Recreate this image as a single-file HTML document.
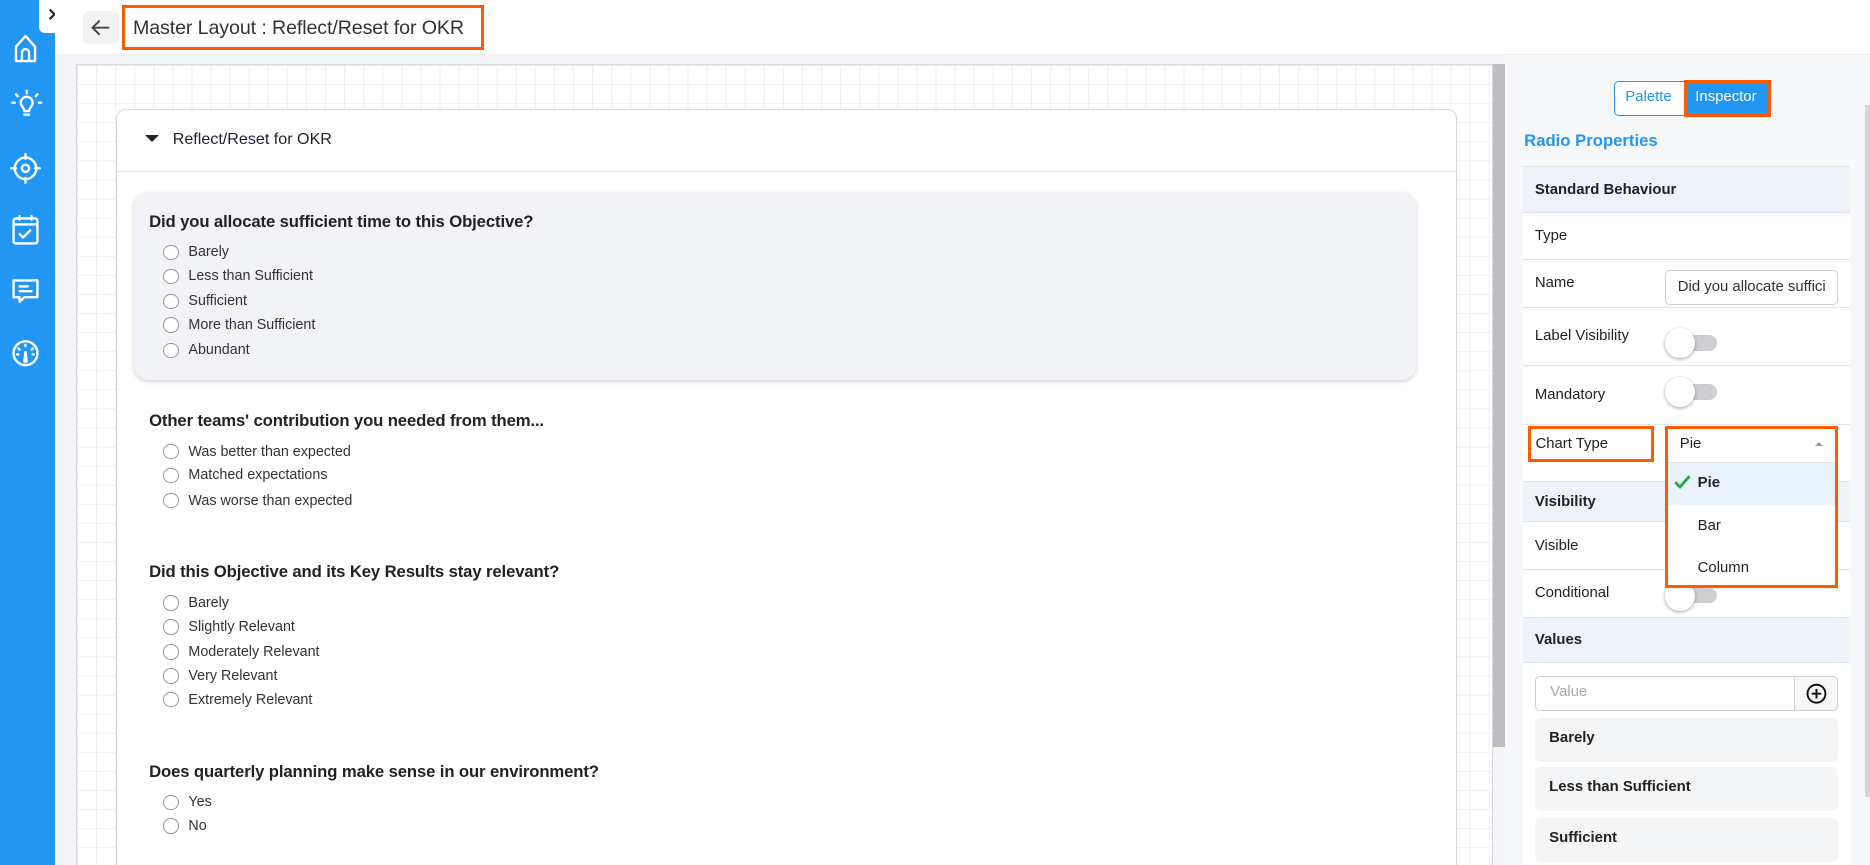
<!DOCTYPE html>
<html><head><meta charset="utf-8">
<style>
html{zoom:1.19260;background:#f4f5f8;overflow:hidden;height:725px}
*{box-sizing:border-box;margin:0;padding:0}
body{width:1568px;height:725px;overflow:hidden;font-family:"Liberation Sans",sans-serif;background:#f4f5f8;position:relative;color:#222}
.abs{position:absolute}
.sb{left:0;top:0;width:46px;height:725px;background:#2196f3}
.tab{left:33px;top:0;width:22px;height:28px;background:#fff;border-radius:0 0 5px 5px}
.hdr{left:46px;top:0;width:1522px;height:46px;background:#fff;border-bottom:1px solid #eceef2}
.back{left:70px;top:9px;width:30px;height:28px;background:#f2f3f5;border-radius:5px}
.title{left:102px;top:4px;width:304px;height:38px;border:3px solid #ff5a00;font-size:16.5px;color:#333;padding:8px 0 0 7px;background:#fff;white-space:nowrap;letter-spacing:-0.1px}
.canvas{left:64px;top:54px;width:1188px;height:671px;border:1px solid #d8d8dc;border-bottom:none;background-color:#fff;
background-image:linear-gradient(#efeff2 1px,transparent 1px),linear-gradient(90deg,#efeff2 1px,transparent 1px);background-size:16px 16px}
.scroll{left:1252px;top:54px;width:10px;height:572px;background:#bdbdc2}
.card{left:97px;top:91px;width:1125px;height:634px;background:#fff;border:1px solid #d8d8dc;border-bottom:none;border-radius:8px 8px 0 0}
.ch{height:52px;border-bottom:1px solid #e6e6ea;font-size:13.5px;padding:17px 0 0 47px;position:relative;color:#1e2230}
.tri{position:absolute;left:24px;top:21px;width:0;height:0;border-left:6px solid transparent;border-right:6px solid transparent;border-top:6px solid #1e2230}
.q1{left:112px;top:162px;width:1075px;height:157px;background:#f2f3f6;border-radius:12px;box-shadow:0 1px 4px rgba(0,0,0,.18)}
.qt{font-size:14px;font-weight:bold;color:#222;position:absolute;left:125px;letter-spacing:-0.1px}
.op{position:absolute;left:137px;font-size:12px;color:#333;display:flex;align-items:center}
.op i{width:13px;height:13px;border:1px solid #999;border-radius:50%;margin-right:8px;background:#fff;display:inline-block}
.rp{left:1262px;top:46px;width:306px;height:679px;background:#f7f8fa}
.rs{left:1564px;top:88px;width:4px;height:580px;background:#d6d6da}
.row{position:absolute;left:1277px;width:274px;border-bottom:1px solid #e2e4e8;background:#fff;font-size:12.5px;padding-left:10px;display:flex;align-items:center;color:#222}
.sec{background:#eef3fa;font-weight:bold}
.tg{position:absolute;left:1396px;width:44px}
.tg b{position:absolute;left:14px;top:3px;width:30px;height:13px;background:#cfcfd2;border-radius:7px}
.tg i{position:absolute;left:0;top:-3px;width:25px;height:25px;border-radius:50%;background:#fff;box-shadow:0 1px 3px rgba(0,0,0,.35)}
.vi{position:absolute;left:1287px;width:254px;height:37px;background:#f4f5f7;border-radius:5px;font-size:12.5px;font-weight:bold;padding:10px 0 0 12px}
</style></head><body>
<div class="abs sb"></div>
<div class="abs tab"><svg width="22" height="28"><path d="M9 8l4 4-4 4" stroke="#222" stroke-width="1.8" fill="none"/></svg></div>
<svg class="abs" style="left:8px;top:25px" width="30" height="290" fill="none" stroke="#fff" stroke-width="2" stroke-linejoin="round" stroke-linecap="round">
<path d="M5 14L13 5l8 9v12H5z M10 26v-7a3 3 0 016 0v7"/>
<g transform="translate(0,52)"><path d="M9 9a5 5 0 1110 0c0 3-3 4-3 7h-4c0-3-3-4-3-7z M12 19h4"/><path d="M14 -1v2M5 2l1.5 1.5M23 2l-1.5 1.5M2 9h2M24 9h2"/></g>
<g transform="translate(0,103)"><circle cx="13" cy="13" r="9"/><circle cx="13" cy="13" r="3"/><path d="M13 1v4M13 21v4M1 13h4M21 13h4"/></g>
<g transform="translate(0,155)"><rect x="3" y="3" width="20" height="21" rx="2"/><path d="M3 8h20M8 1v3M18 1v3M8 16l3 3 6-6"/></g>
<g transform="translate(0,206)"><path d="M3 4h20v14H12l-4 4v-4H3z M8 9h7M8 13h10"/></g>
<g transform="translate(0,258)"><circle cx="13" cy="13" r="10"/><path d="M13 6v1M7 9l1 1M19 9l-1 1M6 14h1M19 14h1M12 20l1-8 1 8z"/></g>
</svg>
<div class="abs hdr"></div>
<div class="abs back"><svg width="30" height="28"><path d="M22 14H9M14 8l-6 6 6 6" stroke="#444" stroke-width="1.6" fill="none"/></svg></div>
<div class="abs title">Master Layout : Reflect/Reset for OKR</div>
<div class="abs canvas"></div>
<div class="abs scroll"></div>
<div class="abs card"><div class="ch"><span class="tri"></span>Reflect/Reset for OKR</div></div>
<div class="abs q1"></div>
<div class="qt" style="top:178px">Did you allocate sufficient time to this Objective?</div>
<div class="op" style="top:205px"><i></i>Barely</div>
<div class="op" style="top:225px"><i></i>Less than Sufficient</div>
<div class="op" style="top:246px"><i></i>Sufficient</div>
<div class="op" style="top:266px"><i></i>More than Sufficient</div>
<div class="op" style="top:287px"><i></i>Abundant</div>
<div class="qt" style="top:345px">Other teams' contribution you needed from them...</div>
<div class="op" style="top:372px"><i></i>Was better than expected</div>
<div class="op" style="top:392px"><i></i>Matched expectations</div>
<div class="op" style="top:413px"><i></i>Was worse than expected</div>
<div class="qt" style="top:471px">Did this Objective and its Key Results stay relevant?</div>
<div class="op" style="top:499px"><i></i>Barely</div>
<div class="op" style="top:519px"><i></i>Slightly Relevant</div>
<div class="op" style="top:540px"><i></i>Moderately Relevant</div>
<div class="op" style="top:560px"><i></i>Very Relevant</div>
<div class="op" style="top:580px"><i></i>Extremely Relevant</div>
<div class="qt" style="top:639px">Does quarterly planning make sense in our environment?</div>
<div class="op" style="top:666px"><i></i>Yes</div>
<div class="op" style="top:686px"><i></i>No</div>

<div class="abs rp"></div>
<div class="abs rs"></div>
<div class="abs" style="left:1353px;top:68px;width:60px;height:29px;border:1px solid #2196f3;border-radius:4px 0 0 4px;background:#fff;color:#2196f3;font-size:12.5px;padding:6px 0 0 9px">Palette</div>
<div class="abs" style="left:1412px;top:67px;width:73px;height:31px;border:3px solid #ff5a00;background:#2196f3;color:#fff;font-size:12.5px;padding:5px 0 0 7px">Inspector</div>
<div class="abs" style="left:1278px;top:110px;color:#2196f3;font-size:14px;font-weight:bold">Radio Properties</div>
<div class="row sec" style="top:139px;height:40px;border-top:1px solid #e2e4e8">Standard Behaviour</div>
<div class="row" style="top:179px;height:39px">Type</div>
<div class="row" style="top:218px;height:40px">Name</div>
<div class="abs" style="left:1396px;top:226px;width:145px;height:30px;border:1px solid #d0d0d4;border-radius:4px;background:#fff;font-size:12.5px;padding:7px 0 0 10px;color:#333;white-space:nowrap;overflow:hidden">Did you allocate suffici</div>
<div class="row" style="top:258px;height:49px">Label Visibility</div>
<div class="tg" style="top:278px"><b></b><i></i></div>
<div class="row" style="top:307px;height:49px">Mandatory</div>
<div class="tg" style="top:319px"><b></b><i></i></div>
<div class="row" style="top:356px;height:48px"></div>
<div class="abs" style="left:1281px;top:357px;width:106px;height:30px;border:3px solid #ff5a00;background:#fff;font-size:12.5px;padding:6px 0 0 4px">Chart Type</div>
<div class="row sec" style="top:404px;height:34px">Visibility</div>
<div class="row" style="top:438px;height:40px">Visible</div>
<div class="row" style="top:478px;height:40px">Conditional</div>
<div class="tg" style="top:490px"><b></b><i></i></div>
<div class="row sec" style="top:518px;height:38px">Values</div>
<div class="row" style="top:556px;height:169px;border:none"></div>
<div class="abs" style="left:1287px;top:567px;width:254px;height:29px;border:1px solid #d0d0d4;border-radius:4px;background:#fff;font-size:12.5px;color:#aaa;padding:6px 0 0 12px">Value</div>
<div class="abs" style="left:1504px;top:567px;width:37px;height:29px;border:1px solid #d0d0d4;border-radius:0 4px 4px 0;background:#f6f6f8"><svg width="37" height="29"><circle cx="18" cy="14" r="7.5" stroke="#111" stroke-width="1.6" fill="none"/><path d="M18 10v8M14 14h8" stroke="#111" stroke-width="1.6"/></svg></div>
<div class="vi" style="top:602px">Barely</div>
<div class="vi" style="top:643px">Less than Sufficient</div>
<div class="vi" style="top:686px;height:37px">Sufficient</div>

<div class="abs" style="left:1396px;top:357px;width:145px;height:136px;border:3px solid #ff5a00;background:#fff;font-size:12.5px">
<div style="height:29px;border-bottom:1px solid #e6e6ea;padding:6px 0 0 10px;position:relative">Pie<span style="position:absolute;right:10px;top:11px;border-left:4px solid transparent;border-right:4px solid transparent;border-bottom:4px solid #999"></span></div>
<div style="height:35px;background:#eaf3fd;padding:10px 0 0 25px;font-weight:bold;position:relative"><svg style="position:absolute;left:5px;top:10px" width="14" height="12"><path d="M1 6l4 4 8-9" stroke="#28a745" stroke-width="2.4" fill="none"/></svg>Pie</div>
<div style="height:36px;padding:11px 0 0 25px">Bar</div>
<div style="height:34px;padding:10px 0 0 25px">Column</div>
</div>
</body></html>
